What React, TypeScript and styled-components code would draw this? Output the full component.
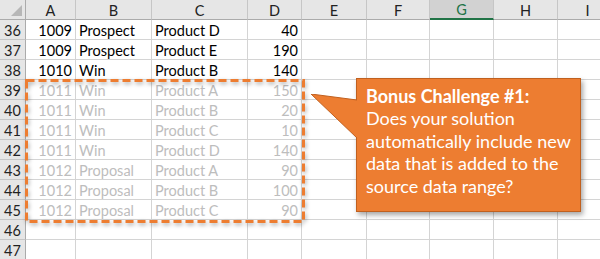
import styled, { createGlobalStyle } from 'styled-components';

const GlobalStyle = createGlobalStyle`
  html, body {
    margin: 0;
    padding: 0;
    background: #ffffff;
  }
  body {
    font-family: Lato, 'Open Sans', sans-serif;
  }
  * {
    box-sizing: border-box;
  }
`;

const COLS = ['A', 'B', 'C', 'D', 'E', 'F', 'G', 'H', 'I'];
const SELECTED_COL = 'G';

type Row = {
  num: number;
  id?: string;
  stage?: string;
  product?: string;
  qty?: string;
  faded?: boolean;
};

const rows: Row[] = [
  { num: 36, id: '1009', stage: 'Prospect', product: 'Product D', qty: '40' },
  { num: 37, id: '1009', stage: 'Prospect', product: 'Product E', qty: '190' },
  { num: 38, id: '1010', stage: 'Win', product: 'Product B', qty: '140' },
  { num: 39, id: '1011', stage: 'Win', product: 'Product A', qty: '150', faded: true },
  { num: 40, id: '1011', stage: 'Win', product: 'Product B', qty: '20', faded: true },
  { num: 41, id: '1011', stage: 'Win', product: 'Product C', qty: '10', faded: true },
  { num: 42, id: '1011', stage: 'Win', product: 'Product D', qty: '140', faded: true },
  { num: 43, id: '1012', stage: 'Proposal', product: 'Product A', qty: '90', faded: true },
  { num: 44, id: '1012', stage: 'Proposal', product: 'Product B', qty: '100', faded: true },
  { num: 45, id: '1012', stage: 'Proposal', product: 'Product C', qty: '90', faded: true },
  { num: 46 },
  { num: 47 },
];

const App = () => {
  return (
    <>
      <GlobalStyle />
      <St.Sheet>
        <St.Grid>
          <St.Corner>
            <svg width="26" height="20" viewBox="0 0 26 20">
              <polygon points="22,5 22,16 11,16" fill="#b7b7b7" />
            </svg>
          </St.Corner>
          {COLS.map((c) => (
            <St.ColHead key={c} $selected={c === SELECTED_COL}>
              {c}
            </St.ColHead>
          ))}

          {rows.map((r) => (
            <St.RowFragment key={r.num}>
              <St.RowHead>{r.num}</St.RowHead>
              <St.Cell $align="right" $faded={r.faded}>
                {r.id}
              </St.Cell>
              <St.Cell $faded={r.faded}>{r.stage}</St.Cell>
              <St.Cell $faded={r.faded}>{r.product}</St.Cell>
              <St.Cell $align="right" $faded={r.faded}>
                {r.qty}
              </St.Cell>
              {COLS.slice(4).map((c) => (
                <St.Cell key={c} />
              ))}
            </St.RowFragment>
          ))}
        </St.Grid>

        <St.Marquee>
          <svg width="282" height="146" viewBox="0 0 282 146">
            <rect
              x="1.5"
              y="1.5"
              width="277"
              height="141"
              fill="none"
              stroke="#ed7d31"
              strokeWidth="3"
              strokeDasharray="8 4"
            />
          </svg>
        </St.Marquee>

        <St.Callout>
          <St.Pointer width="48" height="44" viewBox="0 0 48 44">
            <polygon points="0,0 46,6 46,44" fill="#ed7d31" />
            <polyline
              points="46,6 0,0 46,44"
              fill="none"
              stroke="#c0601f"
              strokeWidth="1"
            />
          </St.Pointer>
          <St.CalloutTitle>Bonus Challenge #1:</St.CalloutTitle>
          <St.CalloutText>
            Does your solution automatically include new data that is added to
            the source data range?
          </St.CalloutText>
        </St.Callout>
      </St.Sheet>
    </>
  );
};

export default App;

const St = {
  Sheet: styled.div`
    position: relative;
    width: 600px;
    height: 259px;
    overflow: hidden;
    background: #ffffff;
  `,

  Grid: styled.div`
    display: grid;
    grid-template-columns: 26px 50px 76px 96px 54px 65px 63px 64px 64px 60px;
    grid-auto-rows: 20px;
    font-family: Lato, 'Open Sans', sans-serif;
    font-size: 14.5px;
  `,

  RowFragment: styled.div`
    display: contents;
  `,

  Corner: styled.div`
    background: #e6e6e6;
    border-right: 1px solid #ababab;
    border-bottom: 1px solid #ababab;
    line-height: 0;
  `,

  ColHead: styled.div<{ $selected?: boolean }>`
    display: flex;
    align-items: center;
    justify-content: center;
    padding-top: 1px;

    background: ${({ $selected }) => ($selected ? '#d2d2d2' : '#e6e6e6')};
    border-right: 1px solid #c6c6c6;
    border-bottom: ${({ $selected }) =>
      $selected ? '2px solid #217346' : '1px solid #ababab'};
    color: ${({ $selected }) => ($selected ? '#217346' : '#222222')};
  `,

  RowHead: styled.div`
    display: flex;
    align-items: center;
    justify-content: center;
    padding-top: 1px;

    background: #e6e6e6;
    border-right: 1px solid #ababab;
    border-bottom: 1px solid #c6c6c6;
    color: #222222;
  `,

  Cell: styled.div<{ $align?: 'left' | 'right'; $faded?: boolean }>`
    display: flex;
    align-items: center;
    justify-content: ${({ $align }) =>
      $align === 'right' ? 'flex-end' : 'flex-start'};
    padding: 1px 3px 0;
    white-space: nowrap;
    overflow: hidden;

    border-right: 1px solid #d4d4d4;
    border-bottom: 1px solid #d4d4d4;
    color: ${({ $faded }) => ($faded ? '#bdbdbd' : '#000000')};
  `,

  Marquee: styled.div`
    position: absolute;
    left: 25px;
    top: 79px;
    width: 282px;
    height: 146px;
    line-height: 0;
    filter: drop-shadow(1px 2px 2px rgba(0, 0, 0, 0.35));
  `,

  Callout: styled.div`
    position: absolute;
    left: 356px;
    top: 78px;
    width: 225px;
    height: 134px;
    padding: 6px 8px 0 9px;

    background: #ed7d31;
    border: 1px solid #c0601f;
    box-shadow: 2px 3px 5px rgba(0, 0, 0, 0.35);
    color: #ffffff;
    font-family: Lato, 'Open Sans', sans-serif;
    font-size: 18px;
    line-height: 22.4px;
  `,

  Pointer: styled.svg`
    position: absolute;
    left: -46px;
    top: 15px;
  `,

  CalloutTitle: styled.div`
    font-weight: 700;
  `,

  CalloutText: styled.div`
    font-weight: 400;
  `,
};
